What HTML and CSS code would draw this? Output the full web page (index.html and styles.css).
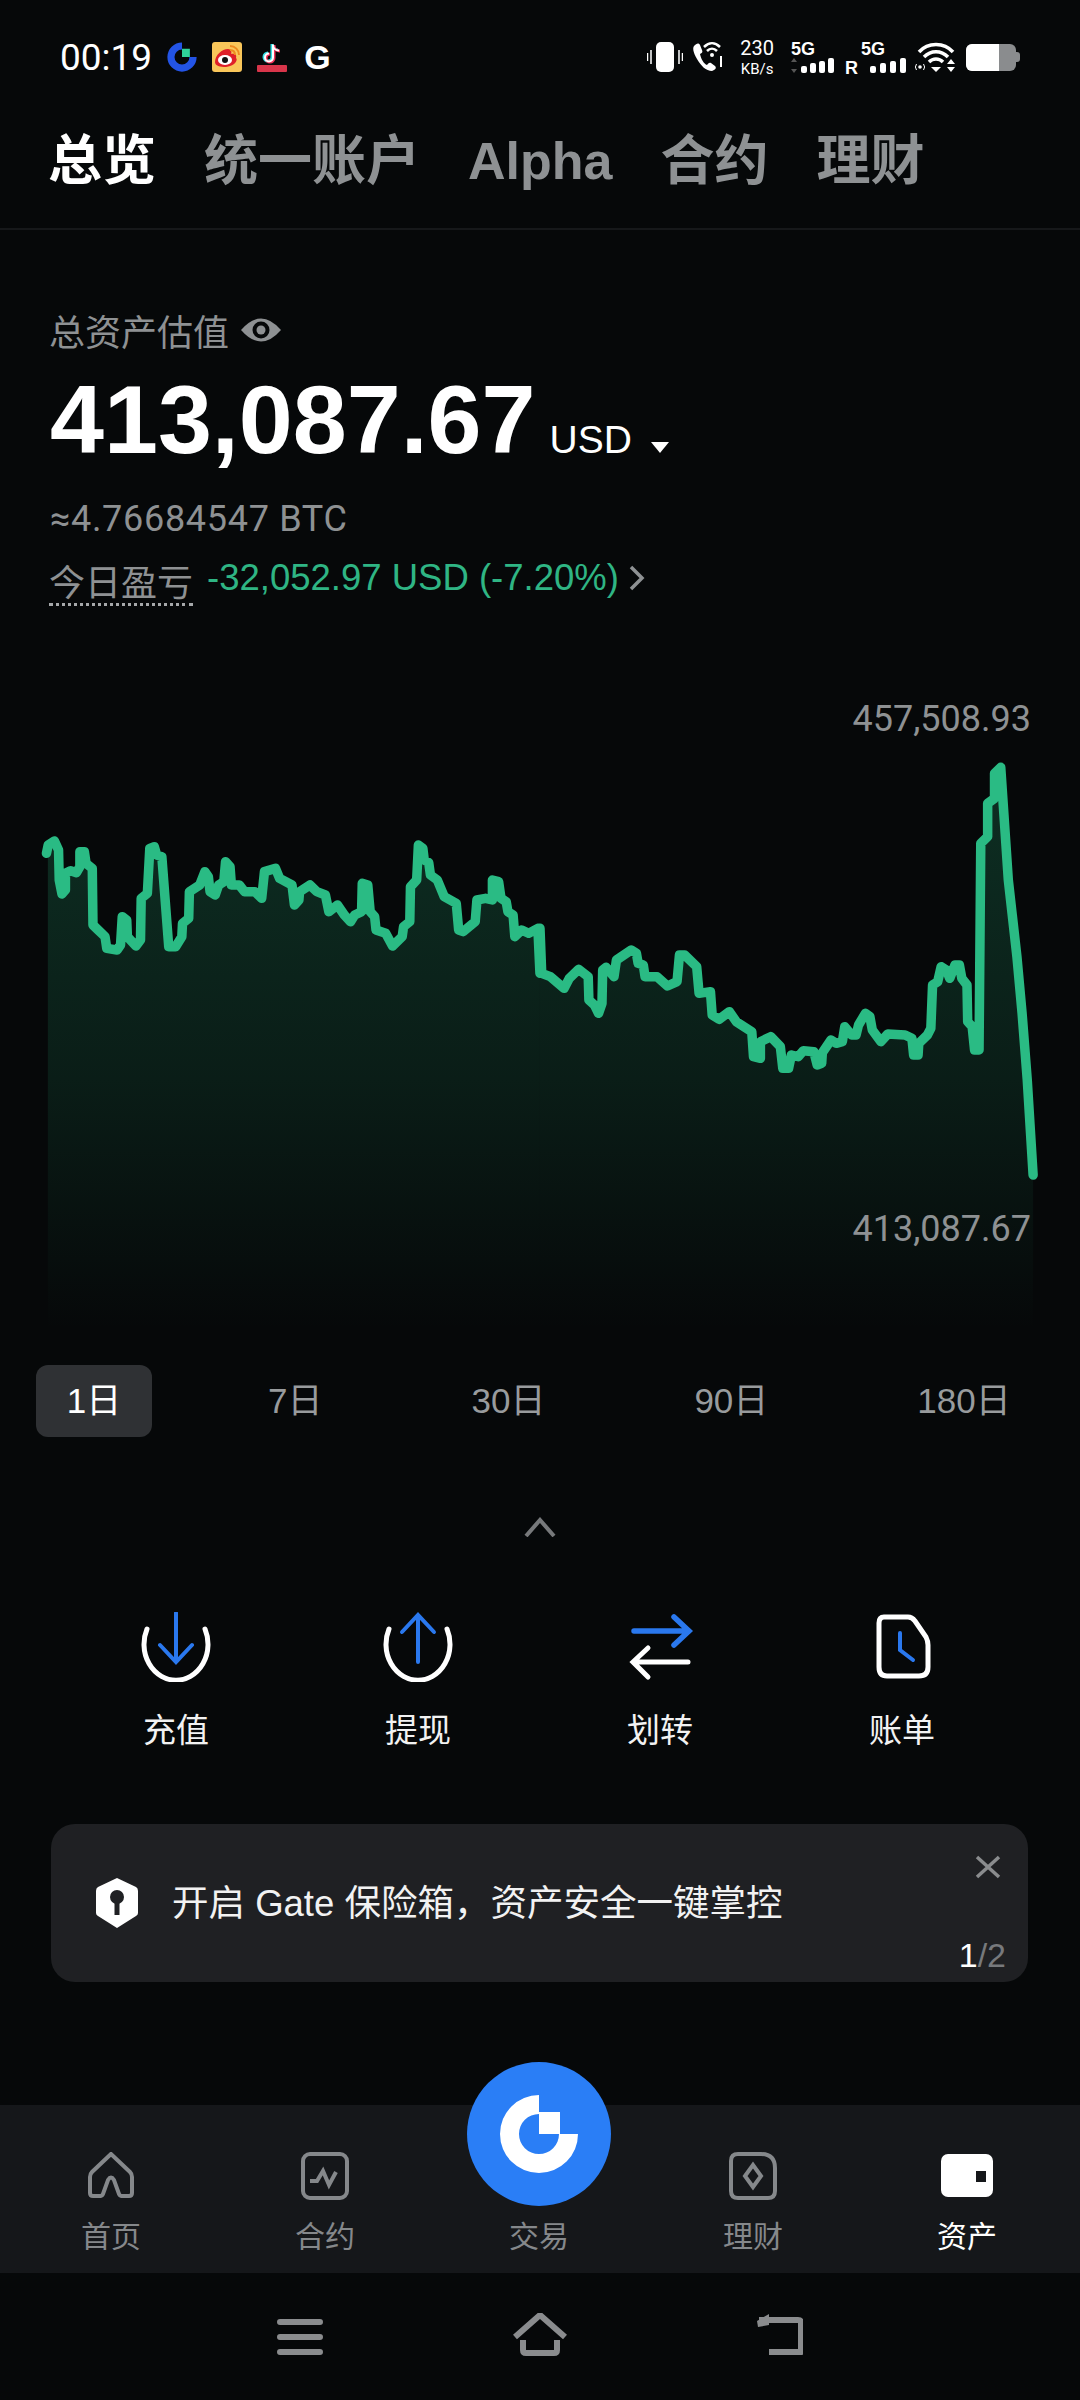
FILE: index.html
```html
<!DOCTYPE html>
<html lang="zh-CN">
<head>
  <meta charset="UTF-8">
  <meta name="viewport" content="width=device-width, initial-scale=1">
  <title>总览</title>
  <link rel="stylesheet" href="styles.css">
</head>
<body>
  <div class="status">
    <div class="status-left">
      <span class="time">00:19</span>
      <svg class="note-icon" width="30" height="30" viewBox="0 0 80 80"><path d="M40 1A39 39 0 1 0 79 40H60A20 20 0 1 1 40 20Z" fill="#2354e6"/><rect x="40" y="18" width="21" height="22" fill="#2fd39a"/></svg>
      <svg class="note-icon" width="30" height="30" viewBox="0 0 30 30"><rect width="30" height="30" rx="3" fill="#f9c65a"/><path d="M3 20C3 13 10 7 16 7C19 7 20 10 19 12C23 11 25 13 24 16C26 17 24 24 14 25C8 25 3 24 3 20Z" fill="#df2029"/><ellipse cx="13" cy="18" rx="7" ry="5" fill="#fff"/><circle cx="13" cy="18" r="3" fill="#111"/><path d="M18 4C23 4 27 8 27 13M18 8C21 8 23 10 23 13" fill="none" stroke="#ee8a1e" stroke-width="2"/></svg>
      <svg class="note-icon" width="30" height="30" viewBox="0 0 30 30"><path d="M15 2V15A4 4 0 1 1 11 11M15 2C15 6 18 8 21 8" fill="none" stroke="#35e0e6" stroke-width="3"/><path d="M17 3V16A4 4 0 1 1 13 12M17 3C17 7 20 9 23 9" fill="none" stroke="#f0325a" stroke-width="3"/><path d="M16 2.500V15.500A4 4 0 1 1 12 11.500M16 2.500C16 6.500 19 8.500 22 8.500" fill="none" stroke="#fff" stroke-width="2"/><rect y="23" width="30" height="7" rx="1" fill="#d8354a"/></svg>
      <span class="note-g">G</span>
    </div>
    <div class="status-right">
      <svg class="st-vib" width="36" height="30" viewBox="0 0 36 30"><rect x="9" width="18" height="30" rx="5" fill="#fff"/><path d="M4 8V22M0.500 11V19M32 8V22M35.500 11V19" stroke="#fff" stroke-width="1.500"/></svg>
      <svg class="st-call" width="32" height="30" viewBox="0 0 32 30"><path d="M3 3C0 5 1 10 5 17C9 24 14 29 20 29C23 28 25 26 23 24L19 21C17 20 16 22 15 23C12 22 9 17 8 12C10 11 11 10 10 8L8 3C7 1 5 1 3 3Z" fill="#fff"/><path d="M12 5C17 0 23 0 28 5M15 9C18 6 22 6 25 9" fill="none" stroke="#fff" stroke-width="2.500"/><circle cx="20" cy="13" r="2" fill="#fff"/><path d="M29 14V25" stroke="#fff" stroke-width="2"/></svg>
      <div class="speed"><span class="speed-val">230</span><span class="speed-unit">KB/s</span></div>
      <div class="net">
        <span class="net-label">5G</span>
        <svg width="43" height="15" viewBox="0 0 43 15"><path d="M3 0L6 4H0ZM3 15L0 11H6Z" fill="#555"/><rect x="10" y="8" width="6" height="7" rx="2" fill="#fff"/><rect x="19" y="5" width="6" height="10" rx="2" fill="#fff"/><rect x="28" y="3" width="6" height="12" rx="2" fill="#fff"/><rect x="37" width="6" height="15" rx="2" fill="#fff"/></svg>
      </div>
      <span class="net-r">R</span>
      <div class="net net-b">
        <span class="net-label">5G</span>
        <svg width="36" height="15" viewBox="0 0 36 15"><rect x="0" y="8" width="6" height="7" rx="2" fill="#fff"/><rect x="10" y="5" width="6" height="10" rx="2" fill="#fff"/><rect x="20" y="3" width="6" height="12" rx="2" fill="#fff"/><rect x="30" width="6" height="15" rx="2" fill="#fff"/></svg>
      </div>
      <svg class="st-wifi" width="40" height="30" viewBox="0 0 40 30"><path d="M4 10C13 0 29 0 38 10M9 15C16 8 26 8 33 15M14 20C18 16 24 16 28 20" fill="none" stroke="#fff" stroke-width="3.500"/><path d="M16 25H26L21 30Z" fill="#fff"/><circle cx="5" cy="25" r="1.800" fill="#fff"/><path d="M1.500 22A5 5 0 0 0 1.500 28M8.500 22A5 5 0 0 1 8.500 28" fill="none" stroke="#fff"/><path d="M36 17L40 22H32ZM36 30L32 25H40Z" fill="#fff"/></svg>
      <div class="battery"><div class="battery-fill"></div></div>
      <div class="battery-nub"></div>
    </div>
  </div>

  <div class="tabs">
    <span class="tab tab-on">总览</span>
    <span class="tab">统一账户</span>
    <span class="tab tab-latin">Alpha</span>
    <span class="tab">合约</span>
    <span class="tab">理财</span>
  </div>

  <div class="summary">
    <div class="sum-label">
      <span>总资产估值</span>
      <svg width="40" height="26" viewBox="0 0 40 26"><path d="M0 13Q20 -10 40 13Q20 36 0 13Z" fill="#8e9193"/><circle cx="20" cy="13" r="8.500" fill="#060809"/><circle cx="20" cy="13" r="4.500" fill="#8e9193"/></svg>
    </div>
    <div class="sum-amount">
      <span class="amount">413,087.67</span>
      <span class="currency">USD</span>
      <span class="caret"></span>
    </div>
    <div class="sum-btc">≈4.76684547 BTC</div>
    <div class="sum-pnl">
      <span class="pnl-label">今日盈亏</span>
      <span class="pnl-val">-32,052.97 USD (-7.20%)</span>
      <svg width="16" height="26" viewBox="0 0 16 26"><path d="M2 2L13 13L2 24" fill="none" stroke="#8e9193" stroke-width="3.500"/></svg>
    </div>
  </div>

  <div class="chart">
    <svg class="chart-svg" width="1080" height="650" viewBox="0 0 1080 650">
      <defs>
        <linearGradient id="area" gradientUnits="userSpaceOnUse" x1="0" y1="210" x2="0" y2="1950">
          <stop offset="0" stop-color="#28be82" stop-opacity=".22"/>
          <stop offset=".224" stop-color="#28be82" stop-opacity=".18"/>
          <stop offset=".57" stop-color="#28be82" stop-opacity=".115"/>
          <stop offset="1" stop-color="#28be82" stop-opacity="0"/>
        </linearGradient>
      </defs>
      <g transform="scale(.34435 .33333)">
        <polygon fill="url(#area)" points="139,520 140,495 158,483 170,510 172,600 180,642 190,630 190,580 205,572 222,578 232,560 232,515 245,515 250,550 268,565 270,735 285,750 305,770 310,805 340,810 350,795 355,710 368,720 370,770 395,798 408,780 410,655 428,640 435,505 448,500 455,525 470,530 490,800 510,800 528,770 530,730 548,715 550,635 580,615 595,575 605,590 610,635 625,645 635,615 650,605 655,545 668,560 672,615 695,615 710,635 740,635 760,655 768,575 800,565 812,595 848,615 855,675 868,660 870,635 900,615 920,635 945,645 955,695 980,675 1000,705 1018,725 1030,705 1050,695 1052,610 1068,615 1075,695 1088,710 1092,750 1120,760 1140,798 1168,770 1172,740 1190,725 1192,620 1210,600 1215,495 1228,505 1232,540 1245,548 1250,585 1270,600 1290,650 1325,670 1332,750 1345,755 1380,725 1385,660 1410,655 1430,660 1430,600 1448,605 1455,655 1470,665 1475,695 1490,705 1495,770 1515,750 1535,760 1562,745 1568,880 1568,1950 139,1950"/>
        <polyline class="chart-line" points="135,520 140,495 158,483 170,510 172,600 180,642 190,630 190,580 205,572 222,578 232,560 232,515 245,515 250,550 268,565 270,735 285,750 305,770 310,805 340,810 350,795 355,710 368,720 370,770 395,798 408,780 410,655 428,640 435,505 448,500 455,525 470,530 490,800 510,800 528,770 530,730 548,715 550,635 580,615 595,575 605,590 610,635 625,645 635,615 650,605 655,545 668,560 672,615 695,615 710,635 740,635 760,655 768,575 800,565 812,595 848,615 855,675 868,660 870,635 900,615 920,635 945,645 955,695 980,675 1000,705 1018,725 1030,705 1050,695 1052,610 1068,615 1075,695 1088,710 1092,750 1120,760 1140,798 1168,770 1172,740 1190,725 1192,620 1210,600 1215,495 1228,505 1232,540 1245,548 1250,585 1270,600 1290,650 1325,670 1332,750 1345,755 1380,725 1385,660 1410,655 1430,660 1430,600 1448,605 1455,655 1470,665 1475,695 1490,705 1495,770 1515,750 1535,760 1562,745 1568,880"/>
      </g>
      <g transform="translate(540 0) scale(.34435 .33333)">
        <polygon fill="url(#area)" points="0,880 30,890 70,925 85,895 112,868 140,890 142,960 158,975 170,1000 180,970 182,870 192,862 215,890 222,840 265,810 280,820 285,850 300,855 305,890 340,890 370,918 398,905 405,825 420,825 455,860 462,940 495,935 500,1005 520,1018 550,995 570,1025 615,1055 620,1130 640,1135 640,1085 670,1070 698,1100 705,1165 722,1165 730,1125 750,1130 765,1112 795,1115 805,1155 818,1150 820,1118 845,1080 860,1090 878,1085 885,1040 905,1065 918,1065 925,1035 945,1000 958,1010 965,1050 990,1085 1010,1062 1060,1065 1080,1075 1085,1125 1098,1125 1100,1090 1125,1065 1135,1045 1140,915 1155,905 1165,860 1180,870 1190,895 1205,855 1218,855 1225,895 1240,915 1242,1025 1255,1040 1262,1110 1275,1110 1280,490 1300,470 1300,370 1320,355 1320,280 1338,262 1360,600 1385,830 1400,1000 1415,1200 1432,1485 1432,1950 0,1950"/>
        <polyline class="chart-line" points="0,745 5,880 30,890 70,925 85,895 112,868 140,890 142,960 158,975 170,1000 180,970 182,870 192,862 215,890 222,840 265,810 280,820 285,850 300,855 305,890 340,890 370,918 398,905 405,825 420,825 455,860 462,940 495,935 500,1005 520,1018 550,995 570,1025 615,1055 620,1130 640,1135 640,1085 670,1070 698,1100 705,1165 722,1165 730,1125 750,1130 765,1112 795,1115 805,1155 818,1150 820,1118 845,1080 860,1090 878,1085 885,1040 905,1065 918,1065 925,1035 945,1000 958,1010 965,1050 990,1085 1010,1062 1060,1065 1080,1075 1085,1125 1098,1125 1100,1090 1125,1065 1135,1045 1140,915 1155,905 1165,860 1180,870 1190,895 1205,855 1218,855 1225,895 1240,915 1242,1025 1255,1040 1262,1110 1275,1110 1280,490 1300,470 1300,370 1320,355 1320,280 1338,262 1360,600 1385,830 1400,1000 1415,1200 1432,1485"/>
      </g>
    </svg>
    <span class="chart-tag tag-high">457,508.93</span>
    <span class="chart-tag tag-low">413,087.67</span>
  </div>

  <div class="ranges">
    <span class="range range-on">1日</span>
    <span class="range">7日</span>
    <span class="range">30日</span>
    <span class="range">90日</span>
    <span class="range">180日</span>
  </div>

  <div class="fold">
    <svg width="32" height="20" viewBox="0 0 32 20"><path d="M2 19L16 3L30 19" fill="none" stroke="#77797b" stroke-width="4"/></svg>
  </div>

  <div class="actions">
    <div class="action">
      <svg width="80" height="70" viewBox="0 0 80 70"><path d="M11 17A32 36 0 1 0 69 17" class="ic-white"/><path d="M40 1V50M24 33L40 50L56 33" class="ic-blue"/></svg>
      <span>充值</span>
    </div>
    <div class="action">
      <svg width="80" height="70" viewBox="0 0 80 70"><path d="M11 17A32 36 0 1 0 69 17" class="ic-white"/><path d="M40 50V3M24 20L40 3L56 20" class="ic-blue"/></svg>
      <span>提现</span>
    </div>
    <div class="action">
      <svg width="80" height="70" viewBox="0 0 80 70"><path d="M14 19H68M54 5L69 19L54 33" class="ic-blue ic-thick"/><path d="M68 50H14M28 36L13 50L28 65" class="ic-white"/></svg>
      <span>划转</span>
    </div>
    <div class="action">
      <svg width="80" height="70" viewBox="0 0 80 70"><path d="M22 5H46Q50 5 53 9L64 25Q66 29 66 33V55Q66 64 57 64H25Q17 64 17 55V11Q17 5 22 5Z" class="ic-white"/><path d="M38 21V38L51 48" class="ic-blue"/></svg>
      <span>账单</span>
    </div>
  </div>

  <div class="notice">
    <svg width="44" height="50" viewBox="0 0 44 50"><path d="M22 0L41 9Q43 10 43 13V35Q43 37 41 38L22 50L3 38Q1 37 1 35V13Q1 10 3 9Z" fill="#fff"/><circle cx="22" cy="19" r="7" fill="#1f2023"/><rect x="19.500" y="20" width="5" height="17" fill="#1f2023"/></svg>
    <span class="notice-text">开启 Gate 保险箱，资产安全一键掌控</span>
    <svg class="notice-close" width="26" height="24" viewBox="0 0 26 24"><path d="M2 2L24 22M24 2L2 22" stroke="#8a8c8e" stroke-width="3.500"/></svg>
    <span class="notice-page"><b>1</b>/2</span>
  </div>

  <div class="nav">
    <div class="nav-item">
      <svg width="48" height="48" viewBox="0 0 48 48"><path d="M24 2L5 20Q3 22 3 25V41Q3 44 6 44H14Q15 44 16 42L21 28Q24 23 27 28L32 42Q33 44 34 44H42Q45 44 45 41V25Q45 22 43 20Z" class="ic-gray"/></svg>
      <span>首页</span>
    </div>
    <div class="nav-item">
      <svg width="48" height="48" viewBox="0 0 48 48"><rect x="2" y="2" width="44" height="44" rx="7" class="ic-gray"/><path d="M9 29H16L22 19L28 33L35 20" class="ic-gray"/></svg>
      <span>合约</span>
    </div>
    <div class="nav-item nav-mid">
      <span>交易</span>
    </div>
    <div class="nav-item">
      <svg width="48" height="48" viewBox="0 0 48 48"><path d="M9 2H32Q46 2 46 16V39Q46 46 39 46H9Q2 46 2 39V9Q2 2 9 2Z" class="ic-gray"/><path d="M24 13L32 24L24 35L16 24Z" class="ic-gray"/></svg>
      <span>理财</span>
    </div>
    <div class="nav-item nav-on">
      <svg width="52" height="48" viewBox="0 0 52 48"><rect y="2" width="52" height="43" rx="7" fill="#fff"/><rect x="35" y="19" width="10" height="11" fill="#15171a"/></svg>
      <span>资产</span>
    </div>
    <div class="trade-btn">
      <svg width="80" height="80" viewBox="0 0 80 80"><path d="M40 1A39 39 0 1 0 79 40H60A20 20 0 1 1 40 20Z" fill="#fff"/><rect x="40" y="18" width="21" height="22" fill="#fff"/></svg>
    </div>
  </div>

  <div class="sysbar">
    <svg width="46" height="44" viewBox="0 0 46 44"><path d="M3 9H43M3 24H43M3 39H43" class="sys-ic sys-round"/></svg>
    <svg width="56" height="44" viewBox="0 0 56 44"><path d="M3 24L28 2L53 24" class="sys-ic"/><path d="M11 27V37Q11 40 14 40H42Q45 40 45 37V27" class="sys-ic"/></svg>
    <svg width="46" height="44" viewBox="0 0 46 44"><path d="M2 7H41Q44 7 44 10V39H12" class="sys-ic"/><path d="M12 1L0 8L1 14L12 12Z" fill="#8a8c8e"/></svg>
  </div>
</body>
</html>
```

FILE: styles.css
```css
* {
  box-sizing: border-box;
}

body {
  margin: 0;
  width: 1080px;
  height: 2400px;
  overflow: hidden;
  background: #060809;
  color: #fff;
  font-family: 'Liberation Sans', 'Noto Sans CJK SC', sans-serif;
}

svg {
  display: block;
}

/* status bar */
.status {
  height: 114px;
  padding: 0 60px;
  display: flex;
  justify-content: space-between;
  align-items: center;
}

.status-left,
.status-right {
  display: flex;
  align-items: center;
}

.status-left {
  gap: 15px;
}

.time {
  font-family: Roboto, sans-serif;
  font-size: 37px;
}

.note-g {
  font-size: 34px;
  font-weight: bold;
  margin-left: 2px;
}

.st-call {
  margin-left: 9px;
}

.speed {
  display: flex;
  flex-direction: column;
  align-items: center;
  margin-left: 16px;
  font-family: Roboto, sans-serif;
}

.speed-val {
  font-size: 20px;
  line-height: 23px;
}

.speed-unit {
  font-size: 15px;
  line-height: 18px;
}

.net {
  display: flex;
  flex-direction: column;
  gap: 1px;
  width: 43px;
  margin-left: 17px;
}

.net-b {
  width: 36px;
  margin-left: 12px;
}

.net-label {
  font-size: 18px;
  font-weight: bold;
  line-height: 16px;
}

.net-b .net-label {
  margin-left: -9px;
}

.net-r {
  font-size: 18px;
  font-weight: bold;
  align-self: flex-end;
  margin: 0 0 -1px 11px;
}

.st-wifi {
  margin-left: 9px;
}

.battery {
  width: 50px;
  height: 27px;
  margin-left: 11px;
  border-radius: 6px;
  background: #8a8c8e;
  overflow: hidden;
}

.battery-fill {
  width: 33px;
  height: 100%;
  background: #fff;
}

.battery-nub {
  width: 4px;
  height: 10px;
  border-radius: 0 3px 3px 0;
  background: #8a8c8e;
}

/* top tabs */
.tabs {
  height: 116px;
  padding: 0 48px;
  display: flex;
  gap: 48px;
  border-bottom: 2px solid #16181a;
}

.tab {
  font-size: 54px;
  font-weight: bold;
  line-height: 95px;
  color: #8e9193;
}

.tab-latin {
  font-size: 52px;
}

.tab-on {
  color: #fff;
}

/* balance */
.summary {
  padding: 75px 0 0 49px;
}

.sum-label {
  display: flex;
  align-items: center;
  gap: 12px;
  height: 50px;
  font-size: 36px;
  color: #8e9193;
}

.sum-amount {
  display: flex;
  align-items: baseline;
  margin: 10px 0 0 1px;
  height: 110px;
  line-height: 110px;
}

.amount {
  font-size: 97px;
  font-weight: bold;
}

.currency {
  font-size: 39px;
  margin-left: 14px;
}

.caret {
  width: 0;
  height: 0;
  margin: 0 0 24px 19px;
  border-left: 9px solid transparent;
  border-right: 9px solid transparent;
  border-top: 11px solid #fff;
}

.sum-btc {
  margin: 19px 0 0 1px;
  height: 50px;
  line-height: 50px;
  font-family: Roboto, sans-serif;
  font-size: 36px;
  letter-spacing: .7px;
  color: #8e9193;
}

.sum-pnl {
  display: flex;
  align-items: center;
  gap: 10px;
  margin-top: 12px;
  height: 50px;
}

.pnl-label {
  align-self: flex-end;
  font-size: 36px;
  line-height: 39px;
  color: #8e9193;
  border-bottom: 3px dotted #a6a8aa;
  margin-right: 4px;
}

.pnl-val {
  font-size: 36.500px;
  color: #2fb584;
  margin-bottom: 6px;
}

.sum-pnl svg {
  margin-bottom: 6px;
}

/* chart */
.chart {
  position: relative;
  height: 650px;
  margin-top: 74px;
}

.chart-line {
  fill: none;
  stroke: #2abb84;
  stroke-width: 9.500;
  stroke-linejoin: round;
  stroke-linecap: round;
  vector-effect: non-scaling-stroke;
}

.chart-tag {
  position: absolute;
  right: 49px;
  font-family: Roboto, sans-serif;
  font-size: 36px;
  line-height: 44px;
  color: #8e9193;
}

.tag-high {
  top: 17px;
}

.tag-low {
  top: 527px;
}

/* range selector */
.ranges {
  display: flex;
  gap: 149px;
  height: 72px;
  margin-top: 35px;
  padding-left: 36px;
  font-size: 35px;
  line-height: 72px;
  color: #989b9d;
}

.range-on {
  width: 116px;
  margin-right: -33px;
  text-align: center;
  border-radius: 12px;
  background: #2f3134;
  color: #fff;
}

.fold {
  display: flex;
  justify-content: center;
  margin-top: 80px;
}

/* quick actions */
.actions {
  display: grid;
  grid-template-columns: repeat(4, 242px);
  padding-left: 55px;
  margin-top: 75px;
}

.action {
  display: flex;
  flex-direction: column;
  align-items: center;
  font-size: 33px;
  color: #f2f2f2;
}

.action span {
  margin-top: 26px;
  line-height: 46px;
}

.ic-white,
.ic-blue,
.ic-gray {
  fill: none;
}

.ic-white {
  stroke: #fff;
  stroke-width: 5;
  stroke-linecap: round;
}

.ic-blue {
  stroke: #2a78ee;
  stroke-width: 4;
  stroke-linecap: round;
}

.ic-thick {
  stroke-width: 5.500;
}

.ic-gray {
  stroke: #85888b;
  stroke-width: 4;
}

/* notice card */
.notice {
  position: relative;
  display: flex;
  align-items: center;
  gap: 33px;
  height: 158px;
  margin: 70px 52px 0 51px;
  padding-left: 44px;
  border-radius: 24px;
  background: #1f2023;
}

.notice-text {
  font-size: 36.500px;
  color: #f2f2f2;
  margin-bottom: 6px;
}

.notice-close {
  position: absolute;
  top: 31px;
  right: 27px;
}

.notice-page {
  position: absolute;
  right: 22px;
  bottom: 7px;
  font-size: 34px;
  color: #77797c;
}

.notice-page b {
  font-weight: normal;
  color: #fff;
}

/* bottom nav */
.nav {
  position: absolute;
  top: 2105px;
  left: 0;
  width: 1080px;
  height: 168px;
  display: grid;
  grid-template-columns: repeat(5, 214px);
  padding: 0 4px;
  background: #15171a;
}

.nav-item {
  display: flex;
  flex-direction: column;
  align-items: center;
  justify-content: flex-end;
  padding-bottom: 16px;
  font-size: 30px;
  color: #85888b;
}

.nav-item span {
  margin-top: 17px;
  line-height: 40px;
}

.nav-on {
  color: #fff;
}

.trade-btn {
  position: absolute;
  top: -43px;
  left: 467px;
  width: 144px;
  height: 144px;
  display: flex;
  align-items: center;
  justify-content: center;
  border-radius: 50%;
  background: #2a7ef6;
}

/* system buttons */
.sysbar {
  position: absolute;
  top: 2273px;
  left: 0;
  width: 1080px;
  height: 127px;
  padding-top: 40px;
  display: flex;
  justify-content: center;
  gap: 189px;
}

.sys-ic {
  fill: none;
  stroke: #8a8c8e;
  stroke-width: 6;
  stroke-linejoin: round;
}

.sys-round {
  stroke-linecap: round;
}
```
